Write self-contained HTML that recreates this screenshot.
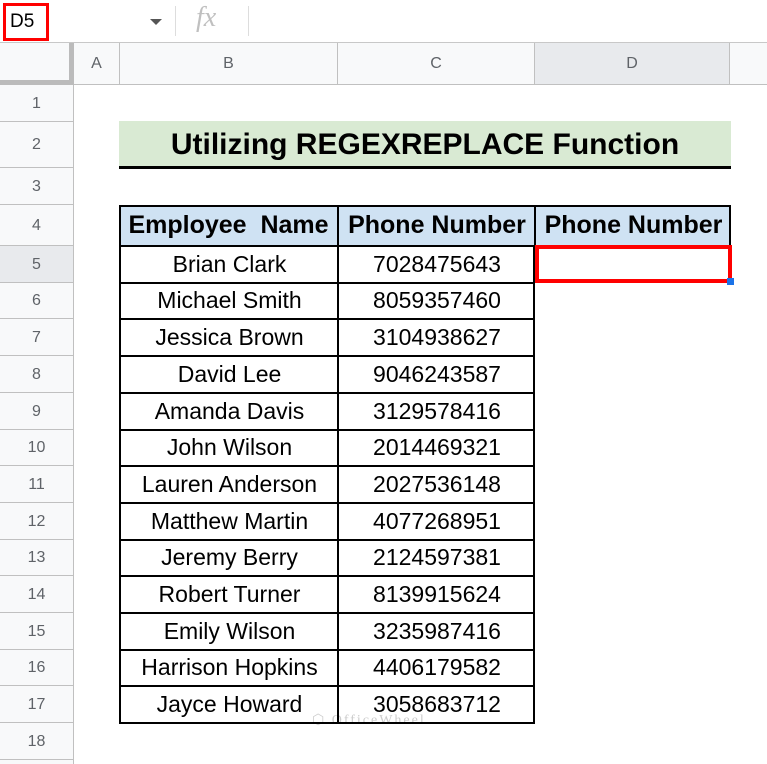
<!DOCTYPE html>
<html><head><style>
html,body{margin:0;width:767px;height:764px;overflow:hidden;background:#fff;font-family:"Liberation Sans",Arial,sans-serif;position:relative}
div{position:absolute;box-sizing:border-box}
.rh{left:0;width:74px;background:#f8f9fa;border-bottom:1px solid #c0c0c0;border-right:1px solid #c0c0c0;color:#5f6368;font-size:16px;text-align:center}
.ch{top:43px;height:42px;background:#f8f9fa;border-right:1px solid #c0c0c0;border-bottom:1px solid #c0c0c0;color:#5f6368;font-size:16px;text-align:center;line-height:42px}
.c{font-size:23px;color:#000;text-align:center;border-left:2px solid #000;border-bottom:2px solid #000;white-space:nowrap}
</style></head><body>
<div style="left:0;top:0;width:767px;height:43px;border-bottom:1px solid #c8c8c8;background:#fff"></div>
<div style="left:3px;top:3px;width:46px;height:38px;border:3px solid #f00;font-size:19px;line-height:32px;padding-left:4px">D5</div>
<div style="left:150px;top:19px;width:0;height:0;border-left:6px solid transparent;border-right:6px solid transparent;border-top:6px solid #555"></div>
<div style="left:175px;top:6px;width:1px;height:30px;background:#ddd"></div>
<div style="left:196px;top:2px;font-size:28px;font-style:italic;color:#c0c0c0;font-family:'Liberation Serif',serif">fx</div>
<div style="left:248px;top:6px;width:1px;height:30px;background:#ddd"></div>
<div style="left:0;top:43px;width:74px;height:42px;background:#f8f9fa;border-right:5px solid #bbb;border-bottom:5px solid #bbb"></div>
<div class="ch" style="left:74px;width:46px">A</div>
<div class="ch" style="left:120px;width:218px">B</div>
<div class="ch" style="left:338px;width:197px">C</div>
<div class="ch" style="left:535px;width:195px;background:#e8eaed">D</div>
<div class="ch" style="left:730px;width:40px"></div>
<div class="rh" style="top:85px;height:37px;line-height:37px">1</div>
<div class="rh" style="top:122px;height:46px;line-height:46px">2</div>
<div class="rh" style="top:168px;height:37px;line-height:37px">3</div>
<div class="rh" style="top:205px;height:41px;line-height:41px">4</div>
<div style="left:119px;top:121px;width:612px;height:48px;background:#d9ead3;border-bottom:3px solid #000;font-weight:bold;font-size:30px;text-align:center;line-height:48px;white-space:nowrap">Utilizing REGEXREPLACE Function</div>
<div style="left:119px;top:205px;width:612px;height:42px;background:#cfe2f3;border:2px solid #000"></div>
<div style="left:119px;top:205px;width:219px;height:42px;font-weight:bold;font-size:25px;text-align:center;line-height:40px;white-space:pre">Employee  Name</div>
<div style="left:337px;top:205px;width:198px;height:42px;border-left:2px solid #000;font-weight:bold;font-size:25px;text-align:center;line-height:40px;white-space:nowrap">Phone Number</div>
<div style="left:534px;top:205px;width:197px;height:42px;border-left:2px solid #000;font-weight:bold;font-size:25px;text-align:center;line-height:40px;white-space:nowrap">Phone Number</div>
<div style="left:119px;top:246px;width:416px;height:477px;border-right:2px solid #000"></div>
<div style="left:535px;top:245px;width:197px;height:38px;border:4px solid #f00"></div>
<div style="left:727px;top:278px;width:7px;height:7px;background:#1a73e8"></div>
<div style="left:312px;top:712px;font-size:14px;color:#ccc;letter-spacing:2px;font-family:'Liberation Serif',serif">⬡ OfficeWheel</div>
<script>
var n=[["Brian Clark","7028475643"],["Michael Smith","8059357460"],["Jessica Brown","3104938627"],["David Lee","9046243587"],["Amanda Davis","3129578416"],["John Wilson","2014469321"],["Lauren Anderson","2027536148"],["Matthew Martin","4077268951"],["Jeremy Berry","2124597381"],["Robert Turner","8139915624"],["Emily Wilson","3235987416"],["Harrison Hopkins","4406179582"],["Jayce Howard","3058683712"]];
var h="";
for(var i=0;i<14;i++){var y=Math.round(246+i*36.7),y2=Math.round(246+(i+1)*36.7);
h+='<div class="rh" style="top:'+y+'px;height:'+(y2-y)+'px;line-height:'+(y2-y)+'px;'+(i==0?'background:#e8eaed':'')+'">'+(i+5)+'</div>';}
h+='<div class="rh" style="top:760px;height:10px"></div>';
n.forEach(function(r,i){var y=Math.round(246+i*36.7),y2=Math.round(246+(i+1)*36.7),hh=y2-y+1;
h+='<div class="c" style="left:119px;top:'+y+'px;width:219px;height:'+hh+'px;line-height:'+(hh-2)+'px">'+r[0]+'</div>';
h+='<div class="c" style="left:337px;top:'+y+'px;width:198px;height:'+hh+'px;line-height:'+(hh-2)+'px">'+r[1]+'</div>';});
document.body.insertAdjacentHTML("beforeend",h);
</script>
</body></html>
